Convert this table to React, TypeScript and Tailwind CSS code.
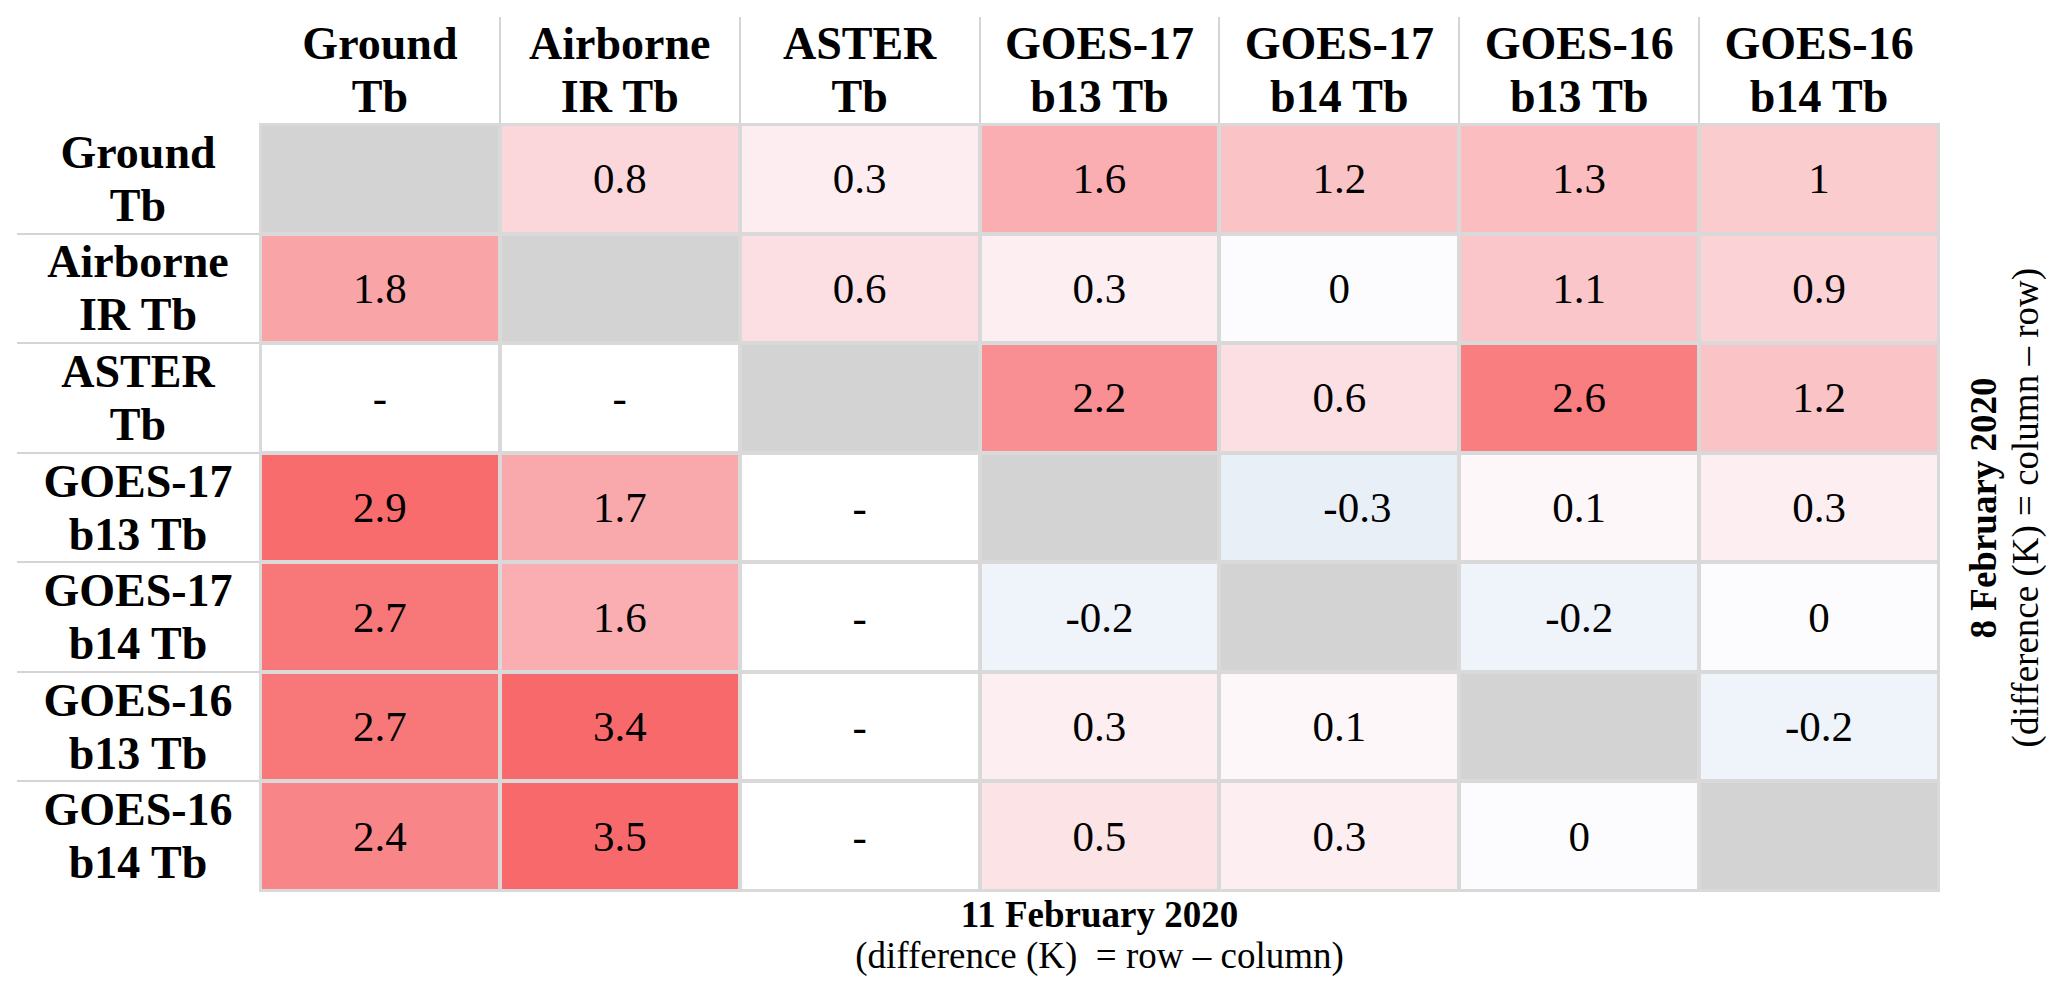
import { Fragment } from "react";

type Cell = { v: string; bg: string; pad?: string };

const labels: [string, string][] = [
  ["Ground", "Tb"],
  ["Airborne", "IR Tb"],
  ["ASTER", "Tb"],
  ["GOES-17", "b13 Tb"],
  ["GOES-17", "b14 Tb"],
  ["GOES-16", "b13 Tb"],
  ["GOES-16", "b14 Tb"],
];

const diag: Cell = { v: "", bg: "bg-[#d3d3d3]" };
const dash: Cell = { v: "-", bg: "bg-white" };

// upper triangle = 8 Feb, lower triangle = 11 Feb
const rows: Cell[][] = [
  [
    diag,
    { v: "0.8", bg: "bg-[#fbd7dc]" },
    { v: "0.3", bg: "bg-[#fdedf0]" },
    { v: "1.6", bg: "bg-[#faaeb2]" },
    { v: "1.2", bg: "bg-[#fac3c6]" },
    { v: "1.3", bg: "bg-[#fbbdc0]" },
    { v: "1", bg: "bg-[#fbccce]" },
  ],
  [
    { v: "1.8", bg: "bg-[#f9a5a8]" },
    diag,
    { v: "0.6", bg: "bg-[#fbdfe2]" },
    { v: "0.3", bg: "bg-[#fceef1]" },
    { v: "0", bg: "bg-[#fcfcfe]" },
    { v: "1.1", bg: "bg-[#fbc6c9]" },
    { v: "0.9", bg: "bg-[#fbd3d6]" },
  ],
  [
    dash,
    dash,
    diag,
    { v: "2.2", bg: "bg-[#f98f92]" },
    { v: "0.6", bg: "bg-[#fbdfe2]" },
    { v: "2.6", bg: "bg-[#f97e80]" },
    { v: "1.2", bg: "bg-[#fac3c6]" },
  ],
  [
    { v: "2.9", bg: "bg-[#f86c6e]" },
    { v: "1.7", bg: "bg-[#f9a9ac]" },
    dash,
    diag,
    { v: "-0.3", bg: "bg-[#e9eff7]", pad: "pl-[36px]" },
    { v: "0.1", bg: "bg-[#fdf7fa]" },
    { v: "0.3", bg: "bg-[#fceef1]" },
  ],
  [
    { v: "2.7", bg: "bg-[#f8787a]" },
    { v: "1.6", bg: "bg-[#faaeb2]" },
    dash,
    { v: "-0.2", bg: "bg-[#eff3fa]" },
    diag,
    { v: "-0.2", bg: "bg-[#eff3fa]" },
    { v: "0", bg: "bg-[#fcfcfe]" },
  ],
  [
    { v: "2.7", bg: "bg-[#f8787a]" },
    { v: "3.4", bg: "bg-[#f8696b]" },
    dash,
    { v: "0.3", bg: "bg-[#fceef1]" },
    { v: "0.1", bg: "bg-[#fdf7fa]" },
    diag,
    { v: "-0.2", bg: "bg-[#eff3fa]" },
  ],
  [
    { v: "2.4", bg: "bg-[#f88587]" },
    { v: "3.5", bg: "bg-[#f8696b]" },
    dash,
    { v: "0.5", bg: "bg-[#fce3e6]" },
    { v: "0.3", bg: "bg-[#fceef1]" },
    { v: "0", bg: "bg-[#fcfcfe]" },
    diag,
  ],
];

export default function App() {
  return (
    <div className="h-[996px] w-[2067px] bg-white pl-[17px] pt-[17px] font-['Liberation_Serif',serif] text-black">
      {/* column headers */}
      <div className="flex">
        <div className="w-[242px] shrink-0" />
        <div className="flex h-[106px] w-[1681px] px-[3px]">
          {labels.map((l, i) => (
            <Fragment key={i}>
              {i > 0 && (
                <div className="flex w-[4px] justify-center">
                  <div className="w-[2px] bg-[#d4d4d4]" />
                </div>
              )}
              <div className="flex min-w-0 flex-1 flex-col items-center justify-center text-[46px] font-bold leading-[53px]">
                <span>{l[0]}</span>
                <span>{l[1]}</span>
              </div>
            </Fragment>
          ))}
        </div>
      </div>

      <div className="flex">
        {/* row headers */}
        <div className="flex h-[769px] w-[242px] shrink-0 flex-col py-[3px]">
          {labels.map((l, i) => (
            <Fragment key={i}>
              {i > 0 && (
                <div className="flex h-[4px] items-center">
                  <div className="h-[2px] w-full bg-[#d4d4d4]" />
                </div>
              )}
              <div className="flex min-h-0 flex-1 flex-col items-center justify-center text-[46px] font-bold leading-[53px]">
                <span>{l[0]}</span>
                <span>{l[1]}</span>
              </div>
            </Fragment>
          ))}
        </div>

        {/* matrix */}
        <div className="grid h-[769px] w-[1681px] shrink-0 grid-cols-7 grid-rows-7 gap-[4px] bg-[#d9d9d9] p-[3px]">
          {rows.flatMap((r, i) =>
            r.map((c, j) => (
              <div
                key={`${i}-${j}`}
                className={`flex items-center justify-center text-[43px] leading-none ${c.bg} ${c.pad ?? ""}`}
              >
                {c.v}
              </div>
            ))
          )}
        </div>

        {/* right axis label */}
        <div className="ml-[23px] flex w-[84px] items-center justify-center">
          <div className="rotate-180 whitespace-nowrap text-center text-[37px] leading-[42px] [writing-mode:vertical-rl]">
            <div className="font-bold">8 February 2020</div>
            <div>(difference (K) = column – row)</div>
          </div>
        </div>
      </div>

      {/* bottom axis label */}
      <div className="ml-[242px] w-[1681px] pt-[2px] text-center text-[37px] leading-[41px]">
        <div className="font-bold">11 February 2020</div>
        <div className="whitespace-pre">(difference (K)  = row – column)</div>
      </div>
    </div>
  );
}
